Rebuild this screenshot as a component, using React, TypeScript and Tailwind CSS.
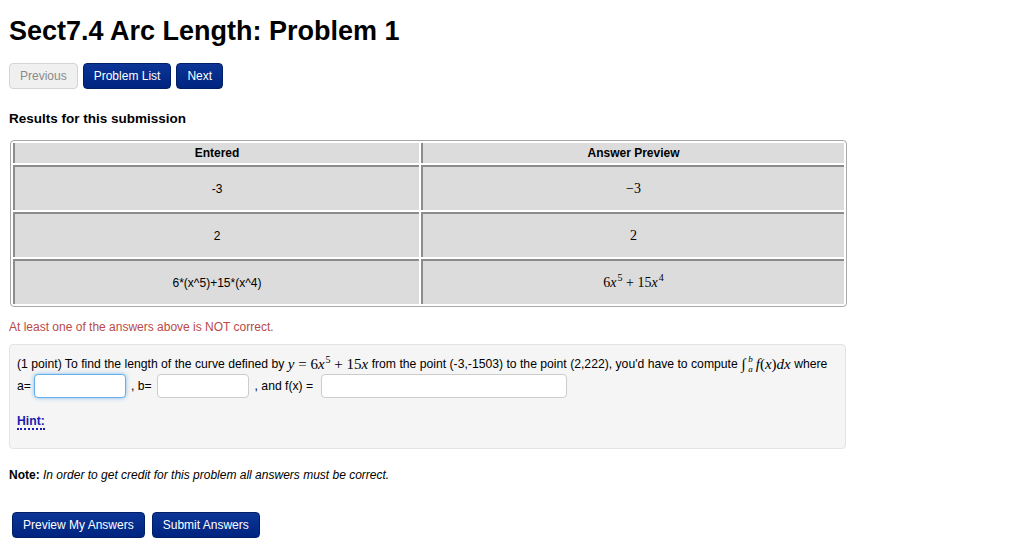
import React from "react";

const sans = { fontFamily: '"Liberation Sans", Arial, Helvetica, sans-serif' };

function M({ children, size = "text-[14px]" }: { children: React.ReactNode; size?: string }) {
  return (
    <span className={size + " whitespace-nowrap"} style={{ fontFamily: '"Liberation Serif", "Times New Roman", serif' }}>
      {children}
    </span>
  );
}

function Var({ children }: { children: React.ReactNode }) {
  return <i className="italic">{children}</i>;
}

function Sup({ children }: { children: React.ReactNode }) {
  return <sup className="text-[10px] -top-[6px] ml-[1px]">{children}</sup>;
}

function BlueBtn({ children, className = "" }: { children: React.ReactNode; className?: string }) {
  return (
    <button
      className={
        "h-[26px] px-[10px] rounded-[4px] border border-[#002066] bg-linear-to-b from-[#0c3597] to-[#002480] text-white text-[12px] leading-[24px] " +
        className
      }
    >
      {children}
    </button>
  );
}

export default function App() {
  const rows = [
    { e: "-3", p: <M>−3</M> },
    { e: "2", p: <M>2</M> },
    {
      e: "6*(x^5)+15*(x^4)",
      p: (
        <M>
          6<Var>x</Var>
          <Sup>5</Sup> + 15<Var>x</Var>
          <Sup>4</Sup>
        </M>
      ),
    },
  ];

  return (
    <div className="w-[1024px] min-h-[546px] bg-white text-black pl-[9px]" style={sans}>
      <h1 className="pt-[15px] text-[27px] leading-[32px] font-bold">Sect7.4 Arc Length: Problem 1</h1>

      <div className="mt-[16px] flex gap-[5px]">
        <button className="h-[26px] px-[10px] rounded-[4px] border border-[#d4d4d4] bg-[#f0f0f0] text-[#8a8a8a] text-[12px] leading-[24px]">
          Previous
        </button>
        <BlueBtn>Problem List</BlueBtn>
        <BlueBtn>Next</BlueBtn>
      </div>

      <h2 className="mt-[22px] text-[13.5px] leading-[16px] font-bold">Results for this submission</h2>

      <table className="mt-[13px] ml-[1px] w-[837px] table-fixed border-separate border-spacing-[2px] border border-[#a8a8a8] rounded-[4px] text-[12px]">
        <colgroup>
          <col className="w-[406px]" />
          <col />
        </colgroup>
        <thead>
          <tr>
            <th className="h-[20px] bg-[#dcdcdc] border-l-2 border-[#8c8c8c] font-bold text-center align-middle p-0">Entered</th>
            <th className="h-[20px] bg-[#dcdcdc] border-l-2 border-[#8c8c8c] font-bold text-center align-middle p-0">Answer Preview</th>
          </tr>
        </thead>
        <tbody>
          {rows.map((r, i) => (
            <tr key={i}>
              <td className="h-[45px] bg-[#dcdcdc] border-l-2 border-t-2 border-[#8c8c8c] text-center align-middle p-0">{r.e}</td>
              <td className="h-[45px] bg-[#dcdcdc] border-l-2 border-t-2 border-[#8c8c8c] text-center align-middle p-0">{r.p}</td>
            </tr>
          ))}
        </tbody>
      </table>

      <div className="mt-[12px] text-[12px] leading-[16px] text-[#b94a48]">At least one of the answers above is NOT correct.</div>

      <div className="mt-[9px] w-[837px] bg-[#f5f5f5] border border-[#e3e3e3] rounded-[4px] pl-[7px] pt-[10px] pb-[18px] text-[12.2px]">
        <div className="h-[18px] leading-[18px] whitespace-nowrap flex items-center">
          <span className="whitespace-pre">(1 point) To find the length of the curve defined by </span>
          <M size="text-[15px]">
            <Var>y</Var> = 6<Var>x</Var>
            <Sup>5</Sup> + 15<Var>x</Var>
          </M>
          <span className="whitespace-pre"> from the point (-3,-1503) to the point (2,222), you'd have to compute </span>
          <M size="text-[15px]">
            <span className="inline-flex items-center">
              <span className="text-[15px] italic leading-[16px]">∫</span>
              <span className="inline-flex flex-col gap-[1px] text-[9px] leading-[9px] ml-[3px] mr-[3px]">
                <Var>b</Var>
                <Var>a</Var>
              </span>
              <span>
                <Var>f</Var>(<Var>x</Var>)<Var>dx</Var>
              </span>
            </span>
          </M>
          <span className="whitespace-pre"> where</span>
        </div>
        <div className="mt-[1px] flex items-center h-[24px] whitespace-pre">
          <span>a=</span>
          <input
            className="ml-[3px] w-[92px] h-[24px] bg-white rounded-[4px] border border-[#66afe9] shadow-[0_0_4px_rgba(102,175,233,0.8)] outline-none px-[6px] text-[12px]"
            defaultValue=""
          />
          <span className="ml-[5px]">, b=</span>
          <input className="ml-[5px] w-[92px] h-[24px] bg-white rounded-[4px] border border-[#cccccc] outline-none" />
          <span className="ml-[6px]">, and f(x) = </span>
          <input className="ml-[4px] w-[246px] h-[24px] bg-white rounded-[4px] border border-[#cccccc] outline-none" />
        </div>
        <div className="mt-[14px]">
          <span className="font-bold text-[#1c1cb0] border-b-2 border-dotted border-[#1c1cb0] leading-[14px] inline-block">Hint:</span>
        </div>
      </div>

      <div className="mt-[18px] text-[12px] leading-[16px]">
        <b>Note:</b> <i>In order to get credit for this problem all answers must be correct.</i>
      </div>

      <div className="mt-[29px] ml-[3px] flex gap-[7px]">
        <BlueBtn className="px-[10.5px]">Preview My Answers</BlueBtn>
        <BlueBtn className="px-[10.5px]">Submit Answers</BlueBtn>
      </div>
    </div>
  );
}
